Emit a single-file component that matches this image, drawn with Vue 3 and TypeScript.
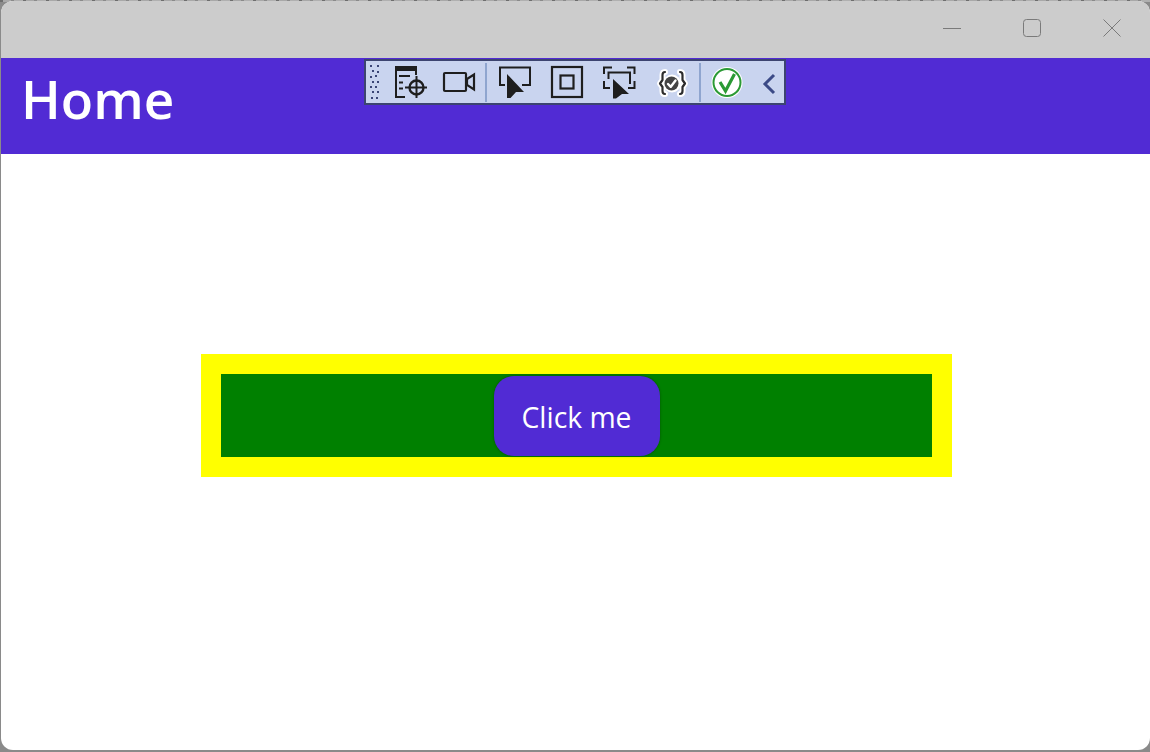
<script setup lang="ts">
const title = 'Home'
</script>

<template>
  <div class="desktop">
    <div class="window">
      <div class="titlebar">
        <svg class="ctl" viewBox="0 0 18 18"><path d="M0 9.500H18" /></svg>
        <svg class="ctl" viewBox="0 0 18 18"><rect x="0.500" y="0.500" width="17" height="17" rx="3" /></svg>
        <svg class="ctl" viewBox="0 0 18 18"><path d="M0.500 0.500L17.500 17.500M17.500 0.500L0.500 17.500" /></svg>
      </div>

      <header class="header">
        <h1 class="title">{{ title }}</h1>
      </header>

      <main class="content">
        <div class="outer">
          <div class="inner">
            <button class="action" type="button">Click me</button>
          </div>
        </div>
      </main>

      <div class="toolbar">
        <svg class="tb" width="20" height="42" viewBox="366 61 20 42">
          <g fill="#3a4576">
            <rect x="370" y="65" width="2" height="2" /><rect x="377" y="65" width="2" height="2" />
            <rect x="372" y="70" width="2" height="2" /><rect x="375" y="75" width="2" height="2" />
            <rect x="370" y="76" width="2" height="2" /><rect x="377" y="71" width="2" height="2" />
            <rect x="372" y="81" width="2" height="2" /><rect x="377" y="81" width="2" height="2" />
            <rect x="370" y="86" width="2" height="2" /><rect x="375" y="86" width="2" height="2" />
            <rect x="372" y="91" width="2" height="2" /><rect x="377" y="91" width="2" height="2" />
            <rect x="371" y="97" width="2" height="2" /><rect x="376" y="97" width="2" height="2" />
          </g>
        </svg>
        <svg class="tb" width="48" height="42" viewBox="386 61 48 42">
          <g fill="none" stroke="#1e1e1e" stroke-width="2">
            <path d="M396 70V97H405" />
            <path d="M416 70V75" />
            <path d="M399 76H410M399 82.500H403M399 88.500H403" />
            <circle cx="416.500" cy="87.500" r="7" stroke-width="2.400" />
            <path d="M405 87.500H427M416.500 76V98" />
          </g>
          <rect x="395" y="66" width="22" height="5" fill="#1e1e1e" />
        </svg>
        <svg class="tb" width="48" height="42" viewBox="434 61 48 42">
          <g fill="none" stroke="#1e1e1e" stroke-width="2.200">
            <rect x="444" y="73" width="22" height="18" rx="1" />
            <path d="M467 79L474 74.500V89.500L467 85Z" />
          </g>
        </svg>
        <span class="sep"></span>
        <svg class="tb" width="44" height="42" viewBox="490 61 44 42">
          <path d="M505 85H500V67.500H530V85H522" fill="none" stroke="#1e1e1e" stroke-width="2" />
          <path d="M507 74L524 92L516 92L510.500 98L507 98Z" fill="#1e1e1e" />
        </svg>
        <svg class="tb" width="60" height="42" viewBox="534 61 60 42">
          <g fill="none" stroke="#1e1e1e" stroke-width="2.200">
            <rect x="552" y="67" width="30" height="30" />
            <rect x="560.500" y="75.500" width="13" height="13" />
          </g>
        </svg>
        <svg class="tb" width="52" height="42" viewBox="594 61 52 42">
          <g fill="none" stroke="#1e1e1e" stroke-width="2">
            <path d="M604 74V67.500H612M627 67.500H634.500V74M604 81V88H610M634.500 81V88H628" />
            <path d="M608.500 79V72.500H630V84" />
          </g>
          <path d="M613 79L629 94L622 94L616 98.500L613 98.500Z" fill="#1e1e1e" />
        </svg>
        <svg class="tb" width="50" height="42" viewBox="646 61 50 42">
          <g fill="none" stroke-linecap="round" stroke-linejoin="round">
            <g stroke="#fff" stroke-width="6">
              <path d="M665 72Q662.500 72 662.500 75V80L660 83.500L662.500 87V91Q662.500 94 665 94" />
              <path d="M680 72Q682.500 72 682.500 75V80L685 83.500L682.500 87V91Q682.500 94 680 94" />
            </g>
            <circle cx="672" cy="83.500" r="9" fill="#fff" />
            <g stroke="#2c2c2c" stroke-width="2.200">
              <path d="M665 72Q662.500 72 662.500 75V80L660 83.500L662.500 87V91Q662.500 94 665 94" />
              <path d="M680 72Q682.500 72 682.500 75V80L685 83.500L682.500 87V91Q682.500 94 680 94" />
            </g>
            <circle cx="671.500" cy="83.500" r="7" fill="#444" />
            <path d="M668 84L670.800 86.800L675.500 80.500" stroke="#fff" stroke-width="2.400" />
          </g>
        </svg>
        <span class="sep"></span>
        <svg class="tb" width="44" height="42" viewBox="704 61 44 42">
          <circle cx="727" cy="82.500" r="15.500" fill="#fff" />
          <circle cx="727" cy="82.500" r="13.500" fill="#fff" stroke="#2b9a35" stroke-width="2" />
          <path d="M720 82L725.500 91L734.500 74" fill="none" stroke="#2b9a35" stroke-width="3.200" />
        </svg>
        <svg class="tb" width="36" height="42" viewBox="748 61 36 42">
          <path d="M774 75L765 84L774 93" fill="none" stroke="#3b4a86" stroke-width="3" />
        </svg>
      </div>
    </div>
  </div>
</template>

<style scoped>
.desktop {
  width: 1150px;
  height: 752px;
  padding: 1px 0 2px 1px;
  box-sizing: border-box;
  overflow: hidden;
  background:
    repeating-linear-gradient(90deg, #6e6e6e 0 3px, #a8a8a8 3px 11px, #8a8a8a 11px 14px, #b0b0b0 14px 23px) top / 100% 2px no-repeat,
    #8a8a8a;
}

.window {
  position: relative;
  display: flex;
  flex-direction: column;
  height: 100%;
  overflow: hidden;
  border-radius: 12px;
  background: #fff;
}

.titlebar {
  display: flex;
  align-items: center;
  justify-content: flex-end;
  gap: 62px;
  flex: none;
  height: 57px;
  padding: 0 29px 6px 0;
  box-sizing: border-box;
  background: #ccc;
}

.ctl {
  width: 18px;
  height: 18px;
  margin-top: 2px;
  fill: none;
  stroke: #7a7a7a;
  stroke-width: 1;
}

.header {
  flex: none;
  height: 96px;
  padding-left: 20px;
  box-sizing: border-box;
  background: #512bd4;
}

.title {
  margin: 0;
  color: #fff;
  font: 600 53px/82px "Open Sans", "Noto Sans", sans-serif;
}

.content {
  flex: 1;
  padding: 200px 0 0 200px;
}

.outer {
  width: 751px;
  padding: 20px;
  box-sizing: border-box;
  background: #ff0;
}

.inner {
  display: flex;
  justify-content: center;
  padding: 2px 0 1px;
  background: #008000;
}

.action {
  width: 166px;
  height: 80px;
  padding: 2px 0 0;
  border: 0;
  border-radius: 20px;
  background: #512bd4;
  box-shadow: 0 0 3px rgba(0, 0, 0, 0.35);
  color: #fff;
  font: 400 28.300px "Open Sans", "Noto Sans", sans-serif;
}

.toolbar {
  position: absolute;
  top: 58px;
  left: 363px;
  display: flex;
  align-items: center;
  width: 422px;
  height: 46px;
  box-sizing: border-box;
  border: 2px solid #3c4470;
  background: #c9d4ef;
}

.tb {
  flex: none;
  display: block;
}

.sep {
  flex: none;
  width: 2px;
  height: 39px;
  margin: 0 3px;
  background: #8fa5cf;
}
</style>
